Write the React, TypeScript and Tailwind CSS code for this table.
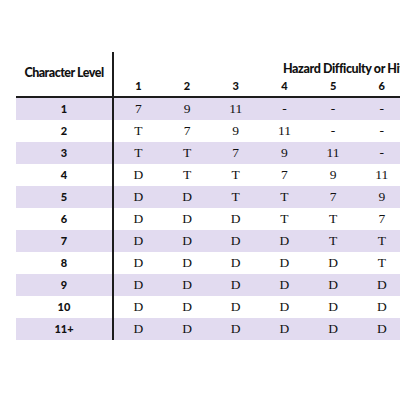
import React from "react";

const rows: [string, string[]][] = [
  ["1", ["7", "9", "11", "-", "-", "-"]],
  ["2", ["T", "7", "9", "11", "-", "-"]],
  ["3", ["T", "T", "7", "9", "11", "-"]],
  ["4", ["D", "T", "T", "7", "9", "11"]],
  ["5", ["D", "D", "T", "T", "7", "9"]],
  ["6", ["D", "D", "D", "T", "T", "7"]],
  ["7", ["D", "D", "D", "D", "T", "T"]],
  ["8", ["D", "D", "D", "D", "D", "T"]],
  ["9", ["D", "D", "D", "D", "D", "D"]],
  ["10", ["D", "D", "D", "D", "D", "D"]],
  ["11+", ["D", "D", "D", "D", "D", "D"]],
];

const headFont = { fontFamily: "Lato, 'Noto Sans', sans-serif" } as const;

export default function App() {
  return (
    <div className="w-[400px] h-[400px] overflow-hidden bg-white pl-[16px] pt-[52px]">
      <div className="w-[600px]">
        {/* header */}
        <div className="flex h-[46px] border-b-2 border-[#1c1c1c]" style={headFont}>
          <div className="w-[98px] shrink-0 border-r-2 border-[#1c1c1c] flex items-center justify-center pb-[2px]">
            <span className="text-[12.5px] font-black text-[#111] tracking-[-0.5px] whitespace-nowrap">
              Character Level
            </span>
          </div>
          <div className="flex flex-col">
            <div className="h-[24px] flex items-end pl-[169px]">
              <span className="text-[12.5px] font-black text-[#111] tracking-[-0.4px] whitespace-nowrap leading-none pb-[1px]">
                Hazard Difficulty or Hit Points
              </span>
            </div>
            <div className="grid grid-cols-[repeat(6,48.7px)] flex-1 items-center">
              {["1", "2", "3", "4", "5", "6"].map((n) => (
                <div key={n} className="text-center text-[11px] font-black text-[#111] pt-[1px]">
                  {n}
                </div>
              ))}
            </div>
          </div>
        </div>
        {/* body */}
        {rows.map(([lvl, cells], i) => (
          <div
            key={lvl}
            className={`flex h-[22px] ${i % 2 === 0 ? "bg-[#e2dbf0]" : "bg-white"}`}
          >
            <div
              className="w-[98px] shrink-0 border-r-2 border-[#1c1c1c] flex items-center justify-center text-[11px] font-black text-[#111]"
              style={headFont}
            >
              {lvl}
            </div>
            <div className="grid grid-cols-[repeat(6,48.7px)] items-center">
              {cells.map((c, j) => (
                <div
                  key={j}
                  className="text-center text-[13.5px] text-[#111] leading-none"
                  style={{ fontFamily: "'Liberation Serif', 'DejaVu Serif', serif" }}
                >
                  {c}
                </div>
              ))}
            </div>
          </div>
        ))}
      </div>
    </div>
  );
}
